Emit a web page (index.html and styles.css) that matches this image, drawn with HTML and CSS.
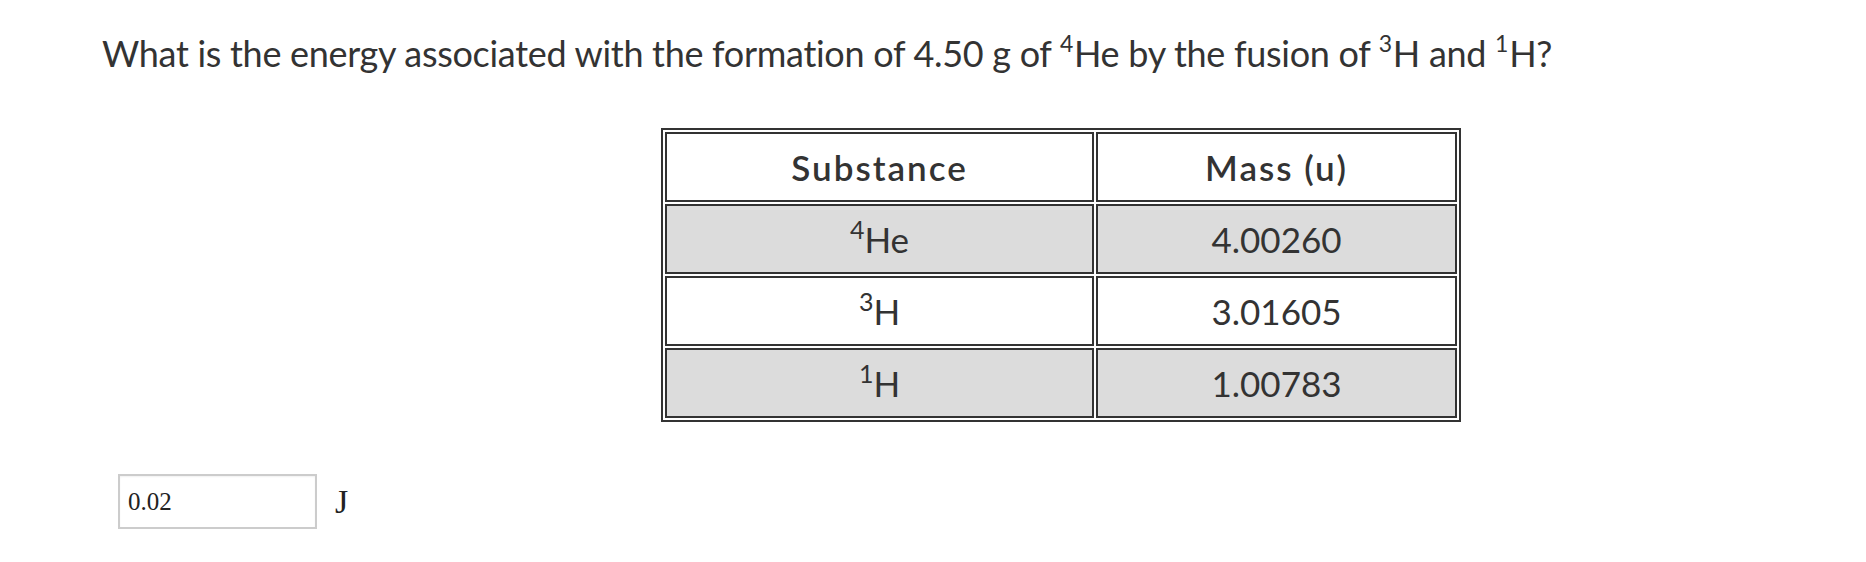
FILE: index.html
```html
<!DOCTYPE html>
<html>
<head>
<meta charset="utf-8">
<link rel="stylesheet" href="styles.css">
</head>
<body>
<div class="page">
  <p class="question">What is the energy associated with the formation of 4.50 g of <sup>4</sup>He by the fusion of <sup>3</sup>H and <sup>1</sup>H?</p>
  <table class="data">
    <tr><th class="c1">Substance</th><th class="c2">Mass (u)</th></tr>
    <tr class="alt"><td><sup>4</sup>He</td><td>4.00260</td></tr>
    <tr><td><sup>3</sup>H</td><td>3.01605</td></tr>
    <tr class="alt"><td><sup>1</sup>H</td><td>1.00783</td></tr>
  </table>
  <div class="answer">
    <input class="field" type="text" value="0.02">
    <span class="unit">J</span>
  </div>
</div>
</body>
</html>
```

FILE: styles.css
```css
html, body {
  margin: 0;
  padding: 0;
  background: #fff;
}
.page {
  padding: 0 0 0 102px;
}
.question {
  margin: 0;
  padding-top: 28px;
  font-family: Lato, "Noto Sans", sans-serif;
  font-size: 36px;
  line-height: 50px;
  color: #333;
  letter-spacing: -0.3px;
}
.question sup {
  font-size: 23px;
  line-height: 0;
  vertical-align: 15px;
  margin-right: 1px;
}
.data {
  margin: 50px 0 0 559px;
  border: 2px solid #333;
  border-spacing: 2px;
  font-family: Lato, "Noto Sans", sans-serif;
  font-size: 35px;
  color: #333;
}
.data th, .data td {
  border: 2px solid #333;
  height: 66px;
  padding: 0;
  text-align: center;
  vertical-align: middle;
}
.data th {
  font-weight: 600;
  letter-spacing: 2px;
}
.data .c1 { width: 425px; }
.data .c2 { width: 357px; }
.data .alt td { background: #dcdcdc; }
.data sup {
  font-size: 25px;
  line-height: 0;
  vertical-align: 14px;
}
.answer {
  display: flex;
  align-items: center;
  margin: 52px 0 0 16px;
  gap: 18px;
}
.field {
  box-sizing: border-box;
  width: 199px;
  height: 55px;
  margin: 0;
  border: 2px solid #ccc;
  box-shadow: inset 0 1px 2px rgba(0, 0, 0, 0.06);
  padding: 4px 8px;
  font-family: "Liberation Serif", serif;
  font-size: 25px;
  color: #222;
  background: #fff;
}
.unit {
  font-family: "Liberation Serif", serif;
  font-size: 34px;
  color: #222;
}
```
